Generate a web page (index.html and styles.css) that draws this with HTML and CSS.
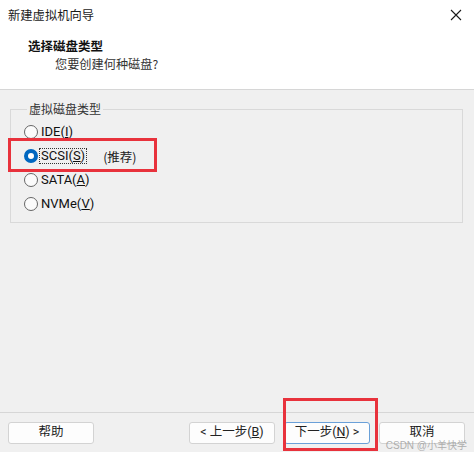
FILE: index.html
```html
<!DOCTYPE html>
<html lang="zh">
<head>
<meta charset="utf-8">
<title>新建虚拟机向导</title>
<link rel="stylesheet" href="styles.css">
</head>
<body>
<div class="window">
  <div class="titlebar">
    <span class="title">新建虚拟机向导</span>
    <svg class="close" width="12" height="12" viewBox="0 0 12 12"><path d="M1 1 L11 11 M11 1 L1 11" stroke="#1a1a1a" stroke-width="1.1" fill="none"/></svg>
  </div>
  <div class="header">
    <div class="h-title">选择磁盘类型</div>
    <div class="h-sub">您要创建何种磁盘?</div>
  </div>
  <div class="content">
    <fieldset class="group">
      <legend>虚拟磁盘类型</legend>
      <div class="row"><span class="radio"></span><span class="lbl">IDE(<u>I</u>)</span></div>
      <div class="row"><span class="radio checked"></span><span class="lbl focus">SCSI(<u>S</u>)</span><span class="rec">(推荐)</span></div>
      <div class="row"><span class="radio"></span><span class="lbl">SATA(<u>A</u>)</span></div>
      <div class="row"><span class="radio"></span><span class="lbl">NVMe(<u>V</u>)</span></div>
    </fieldset>
  </div>
  <div class="footer">
    <button class="btn help">帮助</button>
    <button class="btn">&lt; 上一步(<u>B</u>)</button>
    <button class="btn default">下一步(<u>N</u>) &gt;</button>
    <button class="btn">取消</button>
  </div>
  <div class="mark mark-scsi"></div>
  <div class="mark mark-next"></div>
  <div class="watermark">CSDN @小羊快学</div>
</div>
</body>
</html>
```
FILE: styles.css
```css
* { box-sizing: border-box; }
html, body { margin: 0; padding: 0; background: #fff; }
body { font-family: Roboto, "Noto Sans CJK SC", sans-serif; color: #1a1a1a; }
.window {
  position: relative;
  width: 474px; height: 452px;
  display: flex; flex-direction: column;
  background: #f0f0f0;
  overflow: hidden;
}
.titlebar {
  height: 30px; background: #fff;
  display: flex; align-items: center; justify-content: space-between;
  padding: 0 12px 0 8px;
}
.title { font-family: "Noto Sans CJK SC", sans-serif; font-size: 12.3px; color: #1a1a1a; }
.close { display: block; }
.header {
  height: 60px; background: #fff;
  border-bottom: 1px solid #d6d6d6;
  padding: 7px 0 0 28px;
}
.h-title { font-family: "Noto Sans CJK SC", sans-serif; font-weight: 700; font-size: 12.5px; line-height: 18px; color: #111; }
.h-sub { font-family: "Noto Sans CJK SC", sans-serif; font-size: 12.2px; line-height: 18px; margin-left: 27px; color: #333; }
.content { flex: 1; padding: 11px 11px 0 10px; }
.group {
  margin: 0; padding: 3px 0 6px 13px;
  border: 1px solid #d9d9d9;
  min-width: 0;
}
.group legend {
  font-family: "Noto Sans CJK SC", sans-serif;
  font-size: 12px; line-height: 16px; color: #333;
  margin-left: 3px; padding: 0 2px;
}
.row { height: 24px; display: flex; align-items: center; font-family: Roboto, "Noto Sans CJK SC", sans-serif; font-size: 13px; color: #111; }
.radio {
  width: 14px; height: 14px; border-radius: 50%;
  border: 1px solid #666; background: #fbfbfb;
  margin-right: 2px; flex: none;
}
.radio.checked {
  border: 4.5px solid #0067c0; background: #fff;
}
.lbl { padding: 0 1px; line-height: 14px; }
.lbl u { text-decoration-thickness: 1px; text-underline-offset: 1px; }
.focus { outline: 1px dotted #333; outline-offset: 0; }
.rec { font-family: "Noto Sans CJK SC", sans-serif; font-size: 12.5px; margin-left: 17px; color: #222; }
.footer {
  height: 40px; border-top: 1px solid #d6d6d6;
  display: flex; align-items: flex-start; gap: 9px;
  padding: 9px 9px 0 8px;
}
.btn {
  width: 86px; height: 22px;
  background: #fdfdfd; border: 1px solid #d3d3d3; border-radius: 3px;
  font-family: Roboto, "Noto Sans CJK SC", sans-serif;
  font-size: 12.5px; color: #222; padding: 0 0 2px; line-height: 18px;
}
.btn.help { margin-right: auto; }
.btn.default { border-color: #6aa0d8; }
.btn u { text-underline-offset: 1px; }
.mark { position: absolute; border: 3px solid #e8323c; }
.mark-scsi { left: 8px; top: 138px; width: 149px; height: 34px; }
.mark-next { left: 283px; top: 398px; width: 95px; height: 53px; }
.watermark {
  position: absolute; right: 7px; bottom: 0;
  font-family: "Liberation Sans", "Noto Sans CJK SC", sans-serif;
  font-size: 10px; line-height: 12px; color: rgba(150,150,150,0.75);
}
```
